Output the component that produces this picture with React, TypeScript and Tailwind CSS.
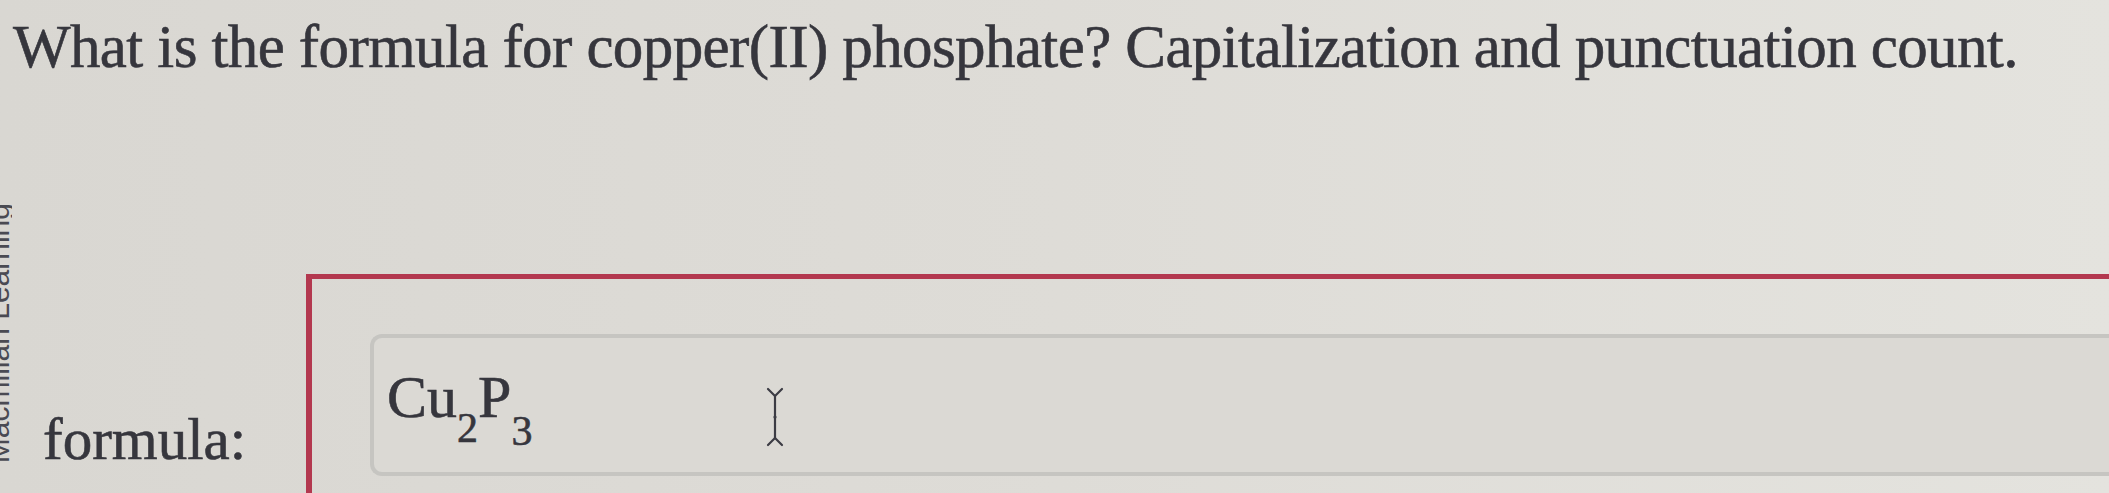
const IBeam = () => (
  <svg width="22" height="62" viewBox="0 0 22 62" fill="none" stroke="#3c3c44" strokeWidth="2.2" strokeLinecap="round">
    <path d="M4 3 L11 10 L18 3" />
    <path d="M11 10 L11 52" />
    <path d="M4 59 L11 52 L18 59" />
    <circle cx="11" cy="31" r="1.6" fill="#3c3c44" stroke="none" />
  </svg>
);

const App = () => {
  return (
    <div className="w-[2109px] h-[493px] overflow-hidden flex bg-gradient-to-r from-[#d9d7d2] via-[#dedcd7] to-[#e4e3de] text-[#36363d] font-['Liberation_Serif',serif] [-webkit-text-stroke:0.6px_#36363d]">
      {/* clipped side label */}
      <div className="w-[12px] shrink-0 overflow-hidden flex flex-col justify-end pb-[30px]">
        <div className="-ml-[14px] [writing-mode:vertical-rl] rotate-180 text-[30px] leading-[26px] text-[#4a4a52] font-['Liberation_Sans',sans-serif] whitespace-nowrap [-webkit-text-stroke:0px]">
          Macmillan Learning
        </div>
      </div>

      <div className="flex-1 flex flex-col">
        <h1 className="pl-[1px] pt-[12px] text-[61px] leading-[70px] tracking-[-0.6px] whitespace-nowrap">
          What is the formula for copper(II) phosphate? Capitalization and punctuation count.
        </h1>

        <div className="flex mt-[192px] flex-1">
          <div className="w-[294px] shrink-0 pl-[31px] pt-[130px] text-[59px] leading-[70px]">
            formula:
          </div>
          <div className="flex-1 border-t-[5px] border-l-[6px] border-[#b3384f] pl-[58px] pt-[55px]">
            <div className="relative h-[142px] rounded-[12px] border-[4px] border-r-0 rounded-r-none border-[#c6c5c1] bg-[#dbd9d4] pl-[13px] pt-[24px]">
              <span className="text-[60px] leading-[70px] whitespace-nowrap">
                Cu<sub className="text-[42px] relative top-[25px] align-baseline">2</sub>P<sub className="text-[42px] relative top-[28px] align-baseline">3</sub>
              </span>
              <div className="absolute left-[390px] top-[48px]">
                <IBeam />
              </div>
            </div>
          </div>
        </div>
      </div>
    </div>
  );
};

export default App;
